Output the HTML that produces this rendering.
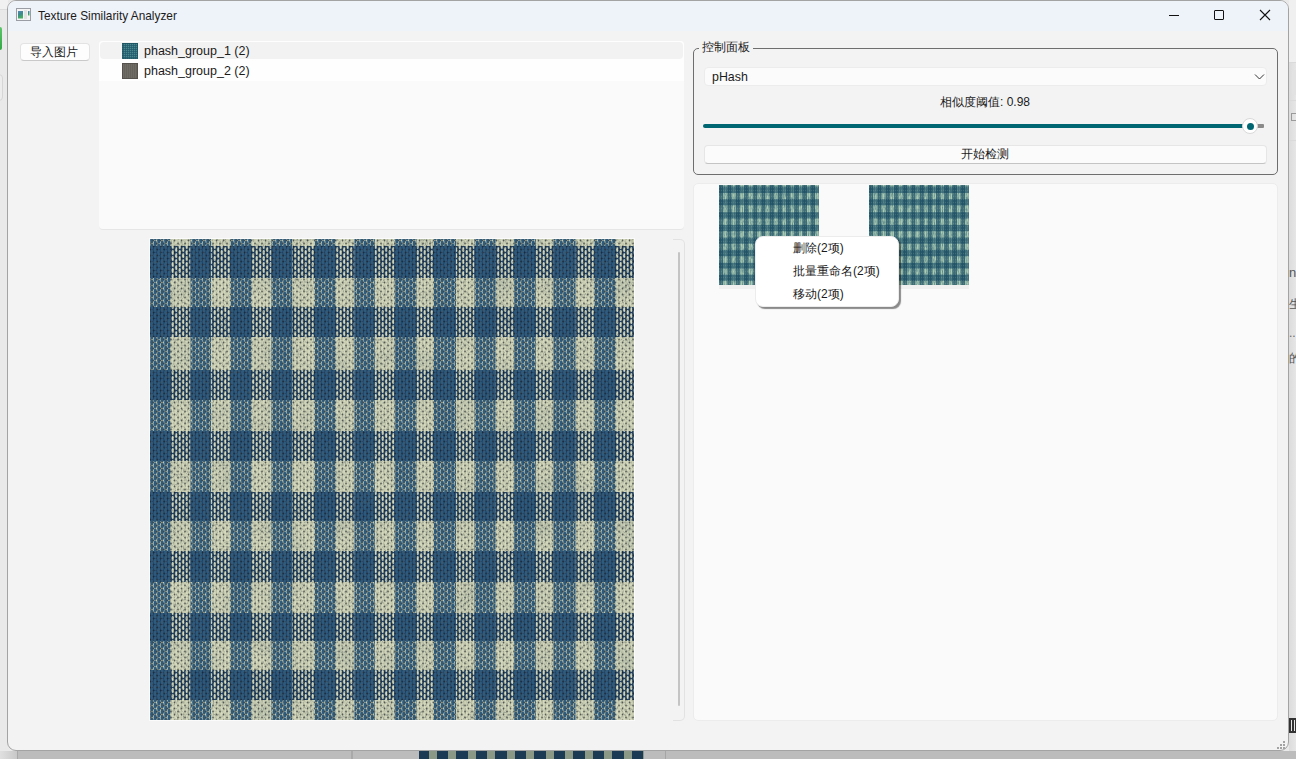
<!DOCTYPE html>
<html><head><meta charset="utf-8">
<style>
*{margin:0;padding:0;box-sizing:border-box}
html,body{width:1296px;height:759px;overflow:hidden;background:#cbcbcb;font-family:"Liberation Sans",sans-serif;font-size:12px;color:#1b1b1b}
.abs{position:absolute}
#win{position:absolute;left:7px;top:0px;width:1282px;height:751px;background:#f3f3f3;border:1px solid #a3a3a3;border-radius:9px;overflow:hidden}
.t{position:absolute;white-space:nowrap;line-height:14px}
</style></head><body>
<div class="abs" style="left:0;top:0;width:1296px;height:751px;background:#e9e9e9"></div>
<div class="abs" style="left:0;top:0;width:8px;height:10px;background:#f1f1f1;border-bottom:1px solid #dddddd"></div>
<div class="abs" style="left:0;top:27px;width:2px;height:23px;background:linear-gradient(180deg,#5cc46a,#34a845);border-radius:0 2px 2px 0"></div>
<div class="abs" style="left:-6px;top:74px;width:9px;height:27px;border:1px solid #d6d6d6;border-radius:4px;background:#ececec"></div>
<div class="abs" style="left:1289px;top:0;width:7px;height:751px;background:linear-gradient(90deg,#dcdcdc,#e6e6e6)"></div>
<div id="win">
  <div class="abs" style="left:0;top:0;width:1282px;height:30px;background:#eef2f9"></div>
</div>
<svg class="abs" style="left:16px;top:8px" width="15" height="13"><rect x=".5" y=".5" width="14" height="12" fill="#f4f4f4" stroke="#9a9ea4"/><defs><linearGradient id="ig" x1="0" y1="0" x2="0.3" y2="1"><stop offset="0" stop-color="#5d86b8"/><stop offset=".5" stop-color="#3a8a8a"/><stop offset="1" stop-color="#48b060"/></linearGradient></defs><rect x="2" y="3" width="5" height="7.5" fill="url(#ig)"/><rect x="8" y="2" width="3" height="9" fill="#e2e2e2"/><rect x="12" y="3" width="1.5" height="4.5" fill="url(#ig)"/></svg>
<div class="t" style="left:38px;top:9px;font-size:11.85px">Texture Similarity Analyzer</div>
<!-- window controls -->
<div class="abs" style="left:1169px;top:15px;width:10px;height:1px;background:#111"></div>
<div class="abs" style="left:1214px;top:10px;width:10px;height:10px;border:1px solid #111;border-radius:1px"></div>
<svg class="abs" style="left:1259px;top:9px" width="12" height="12"><path d="M1 1L11 11M11 1L1 11" stroke="#111" stroke-width="1.1"/></svg>

<!-- import button -->
<div class="abs" style="left:20px;top:43px;width:70px;height:18px;background:#fdfdfd;border:1px solid #e3e3e3;border-bottom-color:#c9c9c9;border-radius:4px"></div>
<div class="t" style="left:30px;top:45px">导入图片</div>

<!-- tree -->
<div class="abs" style="left:99px;top:41px;width:585px;height:189px;background:#fafafa;border-radius:4px;border-bottom:1px solid #e6e6e6"></div>
<div class="abs" style="left:99px;top:41px;width:585px;height:40px;background:#fefefe;border-radius:4px 4px 0 0"></div>
<div class="abs" style="left:100px;top:42px;width:583px;height:17px;background:#f2f2f2;border-radius:4px"></div>
<svg class="abs" style="left:122px;top:43px" width="16" height="16"><defs><pattern id="ic1" width="2" height="2" patternUnits="userSpaceOnUse"><rect width="2" height="2" fill="#2a6677"/><rect y="1" width="2" height="1" fill="#4a8a8e"/><rect x="1" width="1" height="2" fill="#225a6a" opacity=".7"/></pattern></defs><rect width="16" height="16" fill="url(#ic1)"/><rect x=".5" y=".5" width="15" height="15" fill="none" stroke="#1c4e5e" opacity=".6"/></svg>
<div class="abs" style="left:122px;top:63px;width:16px;height:16px;background:repeating-linear-gradient(90deg,#6f6b65 0,#6f6b65 1px,#66625c 1px,#66625c 2px);border:1px solid #55514c"></div>
<div class="t" style="left:144px;top:44px;font-size:12.5px">phash_group_1 (2)</div>
<div class="t" style="left:144px;top:64px;font-size:12.5px">phash_group_2 (2)</div>

<!-- preview scroll frame -->
<div class="abs" style="left:673px;top:239px;width:12px;height:482px;border:1px solid #e2e2e2;border-left:none;border-radius:0 5px 5px 0"></div>
<div class="abs" style="left:678px;top:252px;width:2px;height:454px;background:#c4c4c4;border-radius:1px"></div>
<div class="abs" style="left:149px;top:238px;width:486px;height:483px;background:#fbfbfb"></div>
<svg width="484" height="481" viewBox="0 0 484 481" style="position:absolute;left:150px;top:239px;display:block"><defs>
<pattern id="warpmask" width="7" height="6" patternUnits="userSpaceOnUse"><rect width="7" height="6" fill="#000"/><ellipse cx="1.75" cy="1.5" rx="1.15" ry="2.6" fill="#fff"/><ellipse cx="5.25" cy="4.5" rx="1.15" ry="2.6" fill="#fff"/><ellipse cx="5.25" cy="-1.5" rx="1.15" ry="2.6" fill="#fff"/><ellipse cx="1.75" cy="7.5" rx="1.15" ry="2.6" fill="#fff"/></pattern>
<mask id="wm" maskUnits="userSpaceOnUse" x="0" y="0" width="484" height="481"><rect width="484" height="481" fill="url(#warpmask)"/></mask>
<pattern id="warpmask2" width="7" height="6" patternUnits="userSpaceOnUse"><rect width="7" height="6" fill="#000"/><ellipse cx="1.75" cy="1.5" rx="1.6" ry="2.9" fill="#fff"/><ellipse cx="5.25" cy="4.5" rx="1.6" ry="2.9" fill="#fff"/><ellipse cx="5.25" cy="-1.5" rx="1.6" ry="2.9" fill="#fff"/><ellipse cx="1.75" cy="7.5" rx="1.6" ry="2.9" fill="#fff"/></pattern>
<mask id="wm2" maskUnits="userSpaceOnUse" x="0" y="0" width="484" height="481"><rect width="484" height="481" fill="url(#warpmask2)"/></mask>
<pattern id="holes" width="7" height="6" patternUnits="userSpaceOnUse"><ellipse cx="0" cy="4.5" rx=".8" ry=".9" fill="#151a20"/><ellipse cx="7" cy="4.5" rx=".8" ry=".9" fill="#151a20"/><ellipse cx="3.5" cy="1.5" rx=".8" ry=".9" fill="#151a20"/></pattern>
<filter id="soft" x="0" y="0" width="100%" height="100%"><feGaussianBlur stdDeviation="0.6"/></filter>
<filter id="noise" x="0" y="0" width="100%" height="100%"><feTurbulence type="fractalNoise" baseFrequency="0.6 0.4" numOctaves="2" seed="3" result="n"/><feColorMatrix in="n" type="matrix" values="0 0 0 0 0.08  0 0 0 0 0.1  0 0 0 0 0.1  2.5 0 0 0 -1.2"/></filter>
<filter id="mottle" x="0" y="0" width="100%" height="100%"><feTurbulence type="fractalNoise" baseFrequency="0.03" numOctaves="2" seed="7" result="n"/><feColorMatrix in="n" type="matrix" values="0 0 0 0 0  0 0 0 0 0.02  0 0 0 0 0.08  1.8 0 0 0 -0.8"/></filter>
</defs><g filter="url(#soft)"><rect width="484" height="481" fill="#c8ccb0"/><rect x="0" y="7.0" width="484" height="32.0" fill="#213f60"/><rect x="0" y="68.0" width="484" height="30.0" fill="#213f60"/><rect x="0" y="131.0" width="484" height="30.0" fill="#213f60"/><rect x="0" y="192.0" width="484" height="30.0" fill="#213f60"/><rect x="0" y="253.0" width="484" height="29.0" fill="#213f60"/><rect x="0" y="312.0" width="484" height="31.0" fill="#213f60"/><rect x="0" y="374.0" width="484" height="28.0" fill="#213f60"/><rect x="0" y="431.0" width="484" height="30.0" fill="#213f60"/><g mask="url(#wm)"><rect x="20.5" y="0" width="20.0" height="481" fill="#d5dabe"/><rect x="61.0" y="0" width="19.5" height="481" fill="#d5dabe"/><rect x="101.5" y="0" width="20.0" height="481" fill="#d5dabe"/><rect x="142.1" y="0" width="22.9" height="481" fill="#d5dabe"/><rect x="185.5" y="0" width="19.0" height="481" fill="#d5dabe"/><rect x="225.0" y="0" width="19.5" height="481" fill="#d5dabe"/><rect x="266.5" y="0" width="17.5" height="481" fill="#d5dabe"/><rect x="306.0" y="0" width="18.5" height="481" fill="#d5dabe"/><rect x="345.5" y="0" width="18.5" height="481" fill="#d5dabe"/><rect x="386.0" y="0" width="17.5" height="481" fill="#d5dabe"/><rect x="425.5" y="0" width="18.5" height="481" fill="#d5dabe"/><rect x="465.2" y="0" width="18.8" height="481" fill="#d5dabe"/></g><g mask="url(#wm2)"><rect x="0.0" y="0" width="20.5" height="481" fill="#2f5b7e"/><rect x="40.5" y="0" width="20.5" height="481" fill="#2f5b7e"/><rect x="80.5" y="0" width="21.0" height="481" fill="#2f5b7e"/><rect x="121.5" y="0" width="20.6" height="481" fill="#2f5b7e"/><rect x="165.0" y="0" width="20.5" height="481" fill="#2f5b7e"/><rect x="204.5" y="0" width="20.5" height="481" fill="#2f5b7e"/><rect x="244.5" y="0" width="22.0" height="481" fill="#2f5b7e"/><rect x="284.0" y="0" width="22.0" height="481" fill="#2f5b7e"/><rect x="324.5" y="0" width="21.0" height="481" fill="#2f5b7e"/><rect x="364.0" y="0" width="22.0" height="481" fill="#2f5b7e"/><rect x="403.5" y="0" width="22.0" height="481" fill="#2f5b7e"/><rect x="444.0" y="0" width="21.2" height="481" fill="#2f5b7e"/></g><rect width="484" height="481" fill="url(#holes)" opacity=".65"/></g><rect width="484" height="481" filter="url(#noise)" opacity=".5"/><rect width="484" height="481" filter="url(#mottle)" opacity=".1"/></svg>

<!-- group box -->
<div class="abs" style="left:693px;top:48px;width:585px;height:127px;border:1px solid #6e6e6e;border-radius:5px"></div>
<div class="abs" style="left:699px;top:42px;width:54px;height:12px;background:#f3f3f3"></div>
<div class="t" style="left:702px;top:40px">控制面板</div>
<div class="abs" style="left:704px;top:67px;width:563px;height:19px;background:#fbfbfb;border:1px solid #ececec;border-radius:4px"></div>
<div class="t" style="left:712px;top:70px;font-size:12.4px">pHash</div>
<svg class="abs" style="left:1254px;top:73px" width="12" height="8"><path d="M1 1.5L5.5 6L10 1.5" fill="none" stroke="#333" stroke-width="1"/></svg>
<div class="t" style="left:940px;top:95px">相似度阈值: 0.98</div>
<div class="abs" style="left:703px;top:124px;width:548px;height:4px;background:#006672;border-radius:2px"></div>
<div class="abs" style="left:1250px;top:124px;width:14px;height:4px;background:#8a8a8a;border-radius:1px"></div>
<div class="abs" style="left:1242px;top:118px;width:16px;height:16px;background:#fff;border:1px solid #d9d9d9;border-radius:50%"></div>
<div class="abs" style="left:1246.5px;top:122.5px;width:7px;height:7px;background:#006672;border-radius:50%"></div>
<div class="abs" style="left:704px;top:145px;width:563px;height:19px;background:#fbfbfb;border:1px solid #e6e6e6;border-bottom-color:#c4c4c4;border-radius:4px"></div>
<div class="t" style="left:961px;top:147px">开始检测</div>

<!-- image grid -->
<div class="abs" style="left:693px;top:183px;width:585px;height:538px;background:#fafafa;border:1px solid #ececec;border-radius:5px"></div>
<div class="abs" style="left:719px;top:285px;width:100px;height:4px;background:#f0f0f0"></div>
<div class="abs" style="left:869px;top:285px;width:100px;height:4px;background:#f0f0f0"></div>
<svg width="100" height="100" style="position:absolute;left:719px;top:185px;display:block"><defs><pattern id="tla" width="2" height="3" patternUnits="userSpaceOnUse"><rect x="1" width="1" height="3" fill="#0b2c40"/><rect x="0" y="2" width="1" height="1" fill="#c0dccb"/></pattern>
<filter id="tna" x="0" y="0" width="100%" height="100%"><feTurbulence type="fractalNoise" baseFrequency="0.9 0.25" numOctaves="2" seed="5" result="n"/><feColorMatrix in="n" type="matrix" values="0 0 0 0 0.02  0 0 0 0 0.1  0 0 0 0 0.16  2.8 0 0 0 -1.25"/></filter></defs><g transform="scale(0.20661,0.20790)"><rect width="484" height="481" fill="#a6cab5"/><rect x="0" y="7.0" width="484" height="32.0" fill="#174d66" opacity=".62"/><rect x="0" y="68.0" width="484" height="30.0" fill="#174d66" opacity=".62"/><rect x="0" y="131.0" width="484" height="30.0" fill="#174d66" opacity=".62"/><rect x="0" y="192.0" width="484" height="30.0" fill="#174d66" opacity=".62"/><rect x="0" y="253.0" width="484" height="29.0" fill="#174d66" opacity=".62"/><rect x="0" y="312.0" width="484" height="31.0" fill="#174d66" opacity=".62"/><rect x="0" y="374.0" width="484" height="28.0" fill="#174d66" opacity=".62"/><rect x="0" y="431.0" width="484" height="30.0" fill="#174d66" opacity=".62"/><rect x="0.0" y="0" width="20.5" height="481" fill="#12465f" opacity=".62"/><rect x="40.5" y="0" width="20.5" height="481" fill="#12465f" opacity=".62"/><rect x="80.5" y="0" width="21.0" height="481" fill="#12465f" opacity=".62"/><rect x="121.5" y="0" width="20.6" height="481" fill="#12465f" opacity=".62"/><rect x="165.0" y="0" width="20.5" height="481" fill="#12465f" opacity=".62"/><rect x="204.5" y="0" width="20.5" height="481" fill="#12465f" opacity=".62"/><rect x="244.5" y="0" width="22.0" height="481" fill="#12465f" opacity=".62"/><rect x="284.0" y="0" width="22.0" height="481" fill="#12465f" opacity=".62"/><rect x="324.5" y="0" width="21.0" height="481" fill="#12465f" opacity=".62"/><rect x="364.0" y="0" width="22.0" height="481" fill="#12465f" opacity=".62"/><rect x="403.5" y="0" width="22.0" height="481" fill="#12465f" opacity=".62"/><rect x="444.0" y="0" width="21.2" height="481" fill="#12465f" opacity=".62"/></g><rect width="100" height="100" fill="url(#tla)" opacity=".15"/><rect width="100" height="100" filter="url(#tna)" opacity=".45"/></svg>
<svg width="100" height="100" style="position:absolute;left:869px;top:185px;display:block"><defs><pattern id="tlb" width="2" height="3" patternUnits="userSpaceOnUse"><rect x="1" width="1" height="3" fill="#0b2c40"/><rect x="0" y="2" width="1" height="1" fill="#c0dccb"/></pattern>
<filter id="tnb" x="0" y="0" width="100%" height="100%"><feTurbulence type="fractalNoise" baseFrequency="0.9 0.25" numOctaves="2" seed="9" result="n"/><feColorMatrix in="n" type="matrix" values="0 0 0 0 0.02  0 0 0 0 0.1  0 0 0 0 0.16  2.8 0 0 0 -1.25"/></filter></defs><g transform="scale(0.20661,0.20790)"><rect width="484" height="481" fill="#a6cab5"/><rect x="0" y="7.0" width="484" height="32.0" fill="#174d66" opacity=".62"/><rect x="0" y="68.0" width="484" height="30.0" fill="#174d66" opacity=".62"/><rect x="0" y="131.0" width="484" height="30.0" fill="#174d66" opacity=".62"/><rect x="0" y="192.0" width="484" height="30.0" fill="#174d66" opacity=".62"/><rect x="0" y="253.0" width="484" height="29.0" fill="#174d66" opacity=".62"/><rect x="0" y="312.0" width="484" height="31.0" fill="#174d66" opacity=".62"/><rect x="0" y="374.0" width="484" height="28.0" fill="#174d66" opacity=".62"/><rect x="0" y="431.0" width="484" height="30.0" fill="#174d66" opacity=".62"/><rect x="0.0" y="0" width="20.5" height="481" fill="#12465f" opacity=".62"/><rect x="40.5" y="0" width="20.5" height="481" fill="#12465f" opacity=".62"/><rect x="80.5" y="0" width="21.0" height="481" fill="#12465f" opacity=".62"/><rect x="121.5" y="0" width="20.6" height="481" fill="#12465f" opacity=".62"/><rect x="165.0" y="0" width="20.5" height="481" fill="#12465f" opacity=".62"/><rect x="204.5" y="0" width="20.5" height="481" fill="#12465f" opacity=".62"/><rect x="244.5" y="0" width="22.0" height="481" fill="#12465f" opacity=".62"/><rect x="284.0" y="0" width="22.0" height="481" fill="#12465f" opacity=".62"/><rect x="324.5" y="0" width="21.0" height="481" fill="#12465f" opacity=".62"/><rect x="364.0" y="0" width="22.0" height="481" fill="#12465f" opacity=".62"/><rect x="403.5" y="0" width="22.0" height="481" fill="#12465f" opacity=".62"/><rect x="444.0" y="0" width="21.2" height="481" fill="#12465f" opacity=".62"/></g><rect width="100" height="100" fill="url(#tlb)" opacity=".15"/><rect width="100" height="100" filter="url(#tnb)" opacity=".45"/></svg>

<!-- context menu -->
<div class="abs" style="left:755px;top:236px;width:144px;height:71px;background:#fff;border:1px solid #ececec;border-radius:8px;box-shadow:2px 2px 1px rgba(0,0,0,.45)"></div>
<div class="t" style="left:793px;top:241px">删除(2项)</div>
<div class="t" style="left:793px;top:264px">批量重命名(2项)</div>
<div class="t" style="left:793px;top:287px">移动(2项)</div>

<!-- resize grip -->
<svg class="abs" style="left:1277px;top:741px" width="9" height="9"><g fill="#a3a3a3"><rect x="6" y="0" width="2" height="2"/><rect x="3" y="3" width="2" height="2"/><rect x="6" y="3" width="2" height="2"/><rect x="0" y="6" width="2" height="2"/><rect x="3" y="6" width="2" height="2"/><rect x="6" y="6" width="2" height="2"/></g></svg>
<!-- right strip details -->
<div class="abs" style="left:1289px;top:0;width:7px;height:62px;background:#f0f0f0"></div>
<div class="abs" style="left:1289px;top:62px;width:7px;height:1px;background:#dadada"></div>
<div class="abs" style="left:1292px;top:70px;width:6px;height:25px;background:#e2e2e2;border-radius:4px"></div>
<div class="abs" style="left:1289px;top:100px;width:7px;height:1px;background:#dadada"></div>
<div class="abs" style="left:1291px;top:113px;width:6px;height:8px;border:1px solid #9a9a9a"></div>
<div class="abs" style="left:1289px;top:140px;width:7px;height:1px;background:#dadada"></div>
<div class="abs" style="left:1289px;top:718px;width:7px;height:15px;background:repeating-linear-gradient(90deg,#333 0,#333 2px,#e8e8e8 2px,#e8e8e8 3px);border-top:2px solid #333;border-bottom:2px solid #333"></div>
<div class="t" style="left:1289px;top:266px;font-size:13px;color:#555">n</div>
<div class="t" style="left:1289px;top:297px;font-size:12px;color:#555">生.</div>
<div class="t" style="left:1289px;top:326px;font-size:12px;color:#666">...</div>
<div class="t" style="left:1289px;top:351px;font-size:12px;color:#555">的.</div>
<!-- below window -->
<div class="abs" style="left:0;top:751px;width:1296px;height:8px;background:#bcbcbc"></div>
<div class="abs" style="left:0;top:751px;width:17px;height:8px;background:linear-gradient(90deg,#e0e0e0,#c8c8c8)"></div>
<div class="abs" style="left:17px;top:751px;width:1px;height:8px;background:#a8a8a8"></div>
<div class="abs" style="left:351px;top:751px;width:2px;height:8px;background:#a9a9a9"></div>
<div class="abs" style="left:665px;top:751px;width:1px;height:8px;background:#a5a5a5"></div>
<div class="abs" style="left:419px;top:751px;width:225px;height:8px;background:repeating-linear-gradient(90deg,#1d3a55 0,#1d3a55 9.6px,#8c9886 9.6px,#8c9886 17.6px,#1d3a55 17.6px,#1d3a55 19.5px)"></div>
</body></html>
